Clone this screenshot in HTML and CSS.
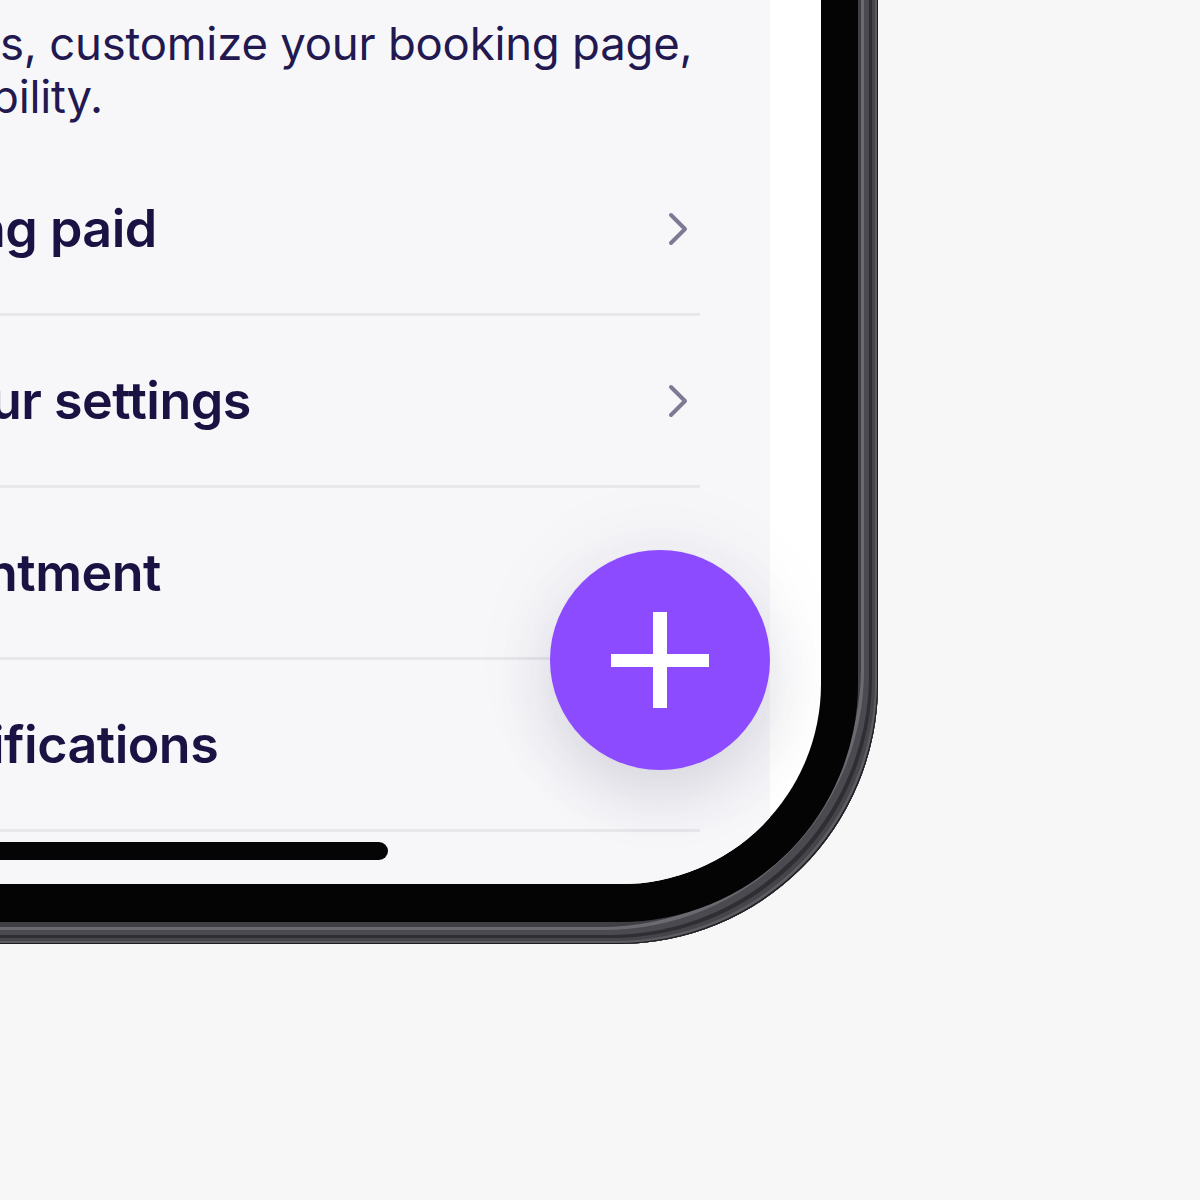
FILE: index.html
```html
<!DOCTYPE html>
<html lang="en">
<head>
<meta charset="utf-8">
<title>Booking setup</title>
<link rel="stylesheet" href="styles.css">
</head>
<body>
  <div class="frame">
    <div class="bezel">
      <div class="screen">
        <div class="content">
          <p class="intro">s, customize your booking page,<br><span class="cut-2">bility.</span></p>
          <ul class="list">
            <li class="row">
              <span class="title cut-a">ng paid</span>
              <svg class="chev" viewBox="0 0 24 36" width="24" height="36"><path d="M5 4 L19 18 L5 32" fill="none" stroke="#7d7a96" stroke-width="4" stroke-linecap="round" stroke-linejoin="round"/></svg>
            </li>
            <li class="row">
              <span class="title cut-b">ur settings</span>
              <svg class="chev" viewBox="0 0 24 36" width="24" height="36"><path d="M5 4 L19 18 L5 32" fill="none" stroke="#7d7a96" stroke-width="4" stroke-linecap="round" stroke-linejoin="round"/></svg>
            </li>
            <li class="row">
              <span class="title cut-c">ntment</span>
            </li>
            <li class="row">
              <span class="title cut-d">ifications</span>
            </li>
          </ul>
          <div class="home-bar"></div>
        </div>
        <button class="fab" aria-label="Add">
          <svg viewBox="0 0 98 96" width="98" height="96"><rect x="42" y="0" width="14" height="96" fill="#fff"/><rect x="0" y="42" width="98" height="13" fill="#fff"/></svg>
        </button>
      </div>
    </div>
  </div>
</body>
</html>
```

FILE: styles.css
```css
html, body {
  margin: 0;
  padding: 0;
  background: #f7f7f7;
  overflow: hidden;
}

body {
  width: 1200px;
  height: 1200px;
  font-family: Inter, "Liberation Sans", sans-serif;
}

.frame {
  width: 878px;
  height: 944px;
  box-sizing: border-box;
  padding: 0 20px 22px 0;
  background: #3f3f44;
  border-bottom-right-radius: 260px;
  box-shadow:
    inset -1px -1px 0 #1e1e21,
    inset -3px -3px 0 #5c5c62,
    inset -6px -6px 0 #45454a,
    inset -9px -9px 0 #2f2f33,
    inset -14px -14px 0 #4a4a50,
    inset -17px -17px 0 #6a6a70;
}

.bezel {
  width: 100%;
  height: 100%;
  box-sizing: border-box;
  padding: 0 37px 38px 0;
  background: #040404;
  border-bottom-right-radius: 238px;
}

.screen {
  position: relative;
  width: 100%;
  height: 100%;
  background: #ffffff;
  border-bottom-right-radius: 200px;
  overflow: hidden;
}

.content {
  width: 770px;
  height: 100%;
  box-sizing: border-box;
  padding-top: 17px;
  background: #f7f7fa;
  overflow: hidden;
}

.intro {
  margin: 0;
  font-size: 45.5px;
  line-height: 53px;
  font-weight: 400;
  color: #211950;
  white-space: nowrap;
  letter-spacing: -0.005em;
}

.cut-2 {
  display: inline-block;
  margin-left: -9px;
}

.list {
  list-style: none;
  margin: 21px 0 0 0;
  padding: 0;
  width: 700px;
}

.row {
  display: flex;
  align-items: center;
  justify-content: space-between;
  height: 169px;
  border-bottom: 3px solid #e8e7ec;
  padding-right: 10px;
}

.title {
  font-size: 52px;
  font-weight: 600;
  color: #1b1244;
  letter-spacing: -0.01em;
  white-space: nowrap;
}

.cut-a { margin-left: -26px; }
.cut-b { margin-left: -10px; }
.cut-c { margin-left: -14px; }
.cut-d { margin-left: -9px; }

.chev {
  display: block;
}

.home-bar {
  width: 388px;
  height: 18px;
  margin-top: 10px;
  background: #050505;
  border-radius: 0 9px 9px 0;
}

.fab {
  position: absolute;
  right: 51px;
  bottom: 114px;
  width: 220px;
  height: 220px;
  border: none;
  padding: 0;
  border-radius: 50%;
  background: #8c4bff;
  display: flex;
  align-items: center;
  justify-content: center;
  box-shadow:
    0 28px 60px rgba(40, 30, 70, 0.12),
    0 0 100px rgba(40, 30, 70, 0.06);
}

.fab svg {
  display: block;
}
```
